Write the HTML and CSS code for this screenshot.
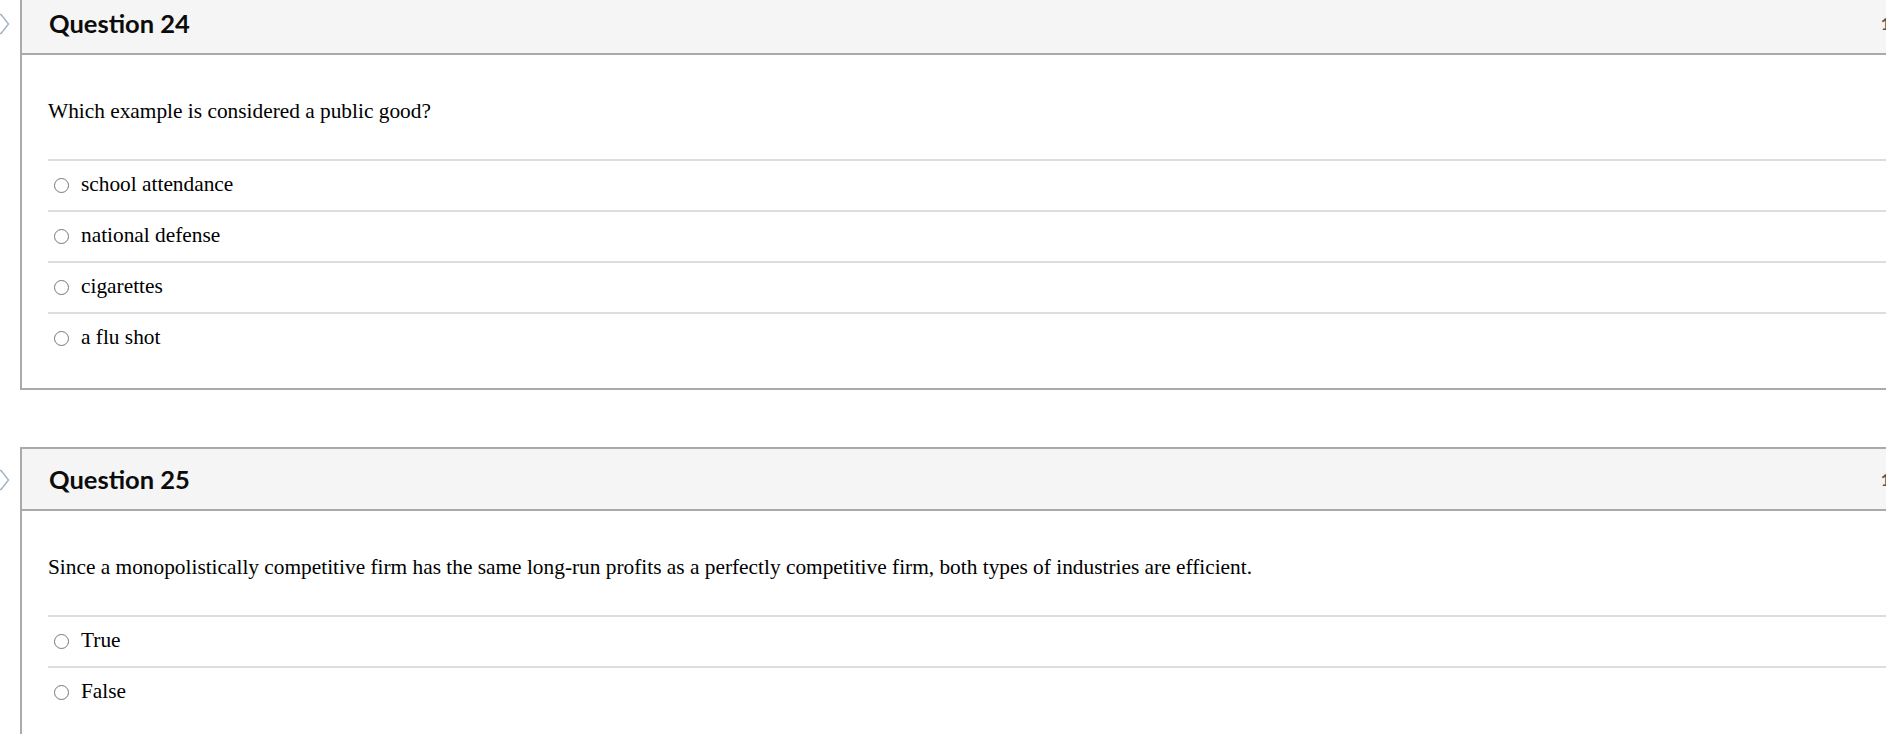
FILE: index.html
```html
<!DOCTYPE html>
<html>
<head>
<meta charset="utf-8">
<link rel="stylesheet" href="styles.css">
</head>
<body>
<div class="page">
  <div class="qwrap">
    <span class="flag"><svg width="30" height="22" viewBox="0 0 30 22"><path d="M1 1.5 H21 L28.5 11 L21 20.5 H1 Z" fill="none" stroke="#9fb2c6" stroke-width="1.4" stroke-linejoin="miter"/></svg></span>
    <div class="question">
      <div class="header"><span class="title">Question 24</span><span class="pts">1 pts</span></div>
      <div class="content">
        <div class="text">Which example is considered a public good?</div>
        <div class="answers">
          <div class="answer"><span class="radio"></span><span class="label">school attendance</span></div>
          <div class="answer"><span class="radio"></span><span class="label">national defense</span></div>
          <div class="answer"><span class="radio"></span><span class="label">cigarettes</span></div>
          <div class="answer"><span class="radio"></span><span class="label">a flu shot</span></div>
        </div>
      </div>
    </div>
  </div>
  <div class="qwrap">
    <span class="flag"><svg width="30" height="22" viewBox="0 0 30 22"><path d="M1 1.5 H21 L28.5 11 L21 20.5 H1 Z" fill="none" stroke="#9fb2c6" stroke-width="1.4" stroke-linejoin="miter"/></svg></span>
    <div class="question">
      <div class="header"><span class="title">Question 25</span><span class="pts">1 pts</span></div>
      <div class="content">
        <div class="text">Since a monopolistically competitive firm has the same long-run profits as a perfectly competitive firm, both types of industries are efficient.</div>
        <div class="answers">
          <div class="answer"><span class="radio"></span><span class="label">True</span></div>
          <div class="answer"><span class="radio"></span><span class="label">False</span></div>
        </div>
      </div>
    </div>
  </div>
</div>
</body>
</html>
```

FILE: styles.css
```css
html, body {
  margin: 0;
  padding: 0;
  background: #ffffff;
  overflow: hidden;
}
.page {
  width: 1912px;
  margin-top: -9px;
  padding-left: 20px;
  display: flex;
  flex-direction: column;
  gap: 57px;
}
.qwrap {
  position: relative;
}
.flag {
  position: absolute;
  left: -40px;
  top: 22px;
  width: 30px;
  height: 22px;
  line-height: 0;
}
.question {
  border: 2px solid #aaaaaa;
  background: #ffffff;
}
.header {
  background: #f5f5f5;
  border-bottom: 2px solid #aaaaaa;
  height: 60px;
  padding: 0 12px 0 27px;
  display: flex;
  align-items: center;
  justify-content: space-between;
}
.title {
  font-family: Lato, "Open Sans", sans-serif;
  font-weight: 700;
  font-size: 25.5px;
  color: #0c0c0c;
}
.pts {
  font-family: Lato, "Open Sans", sans-serif;
  font-size: 17px;
  font-weight: 700;
  color: #555555;
}
.content {
  padding: 44px 0 25px 26px;
}
.text {
  font-family: "Liberation Serif", "Times New Roman", serif;
  font-size: 21.35px;
  line-height: 25px;
  color: #000000;
  margin-bottom: 35px;
}
.answers {
  display: flex;
  flex-direction: column;
}
.answer {
  border-top: 2px solid #dddddd;
  padding: 11px 0 13px;
  display: flex;
  align-items: center;
  font-family: "Liberation Serif", "Times New Roman", serif;
  font-size: 21.35px;
  line-height: 25px;
  color: #000000;
}
.radio {
  box-sizing: border-box;
  width: 15px;
  height: 15px;
  border: 1.4px solid #777777;
  border-radius: 50%;
  background: #ffffff;
  margin-left: 6px;
  margin-right: 12px;
  flex: none;
  position: relative;
  top: 1px;
}
```
